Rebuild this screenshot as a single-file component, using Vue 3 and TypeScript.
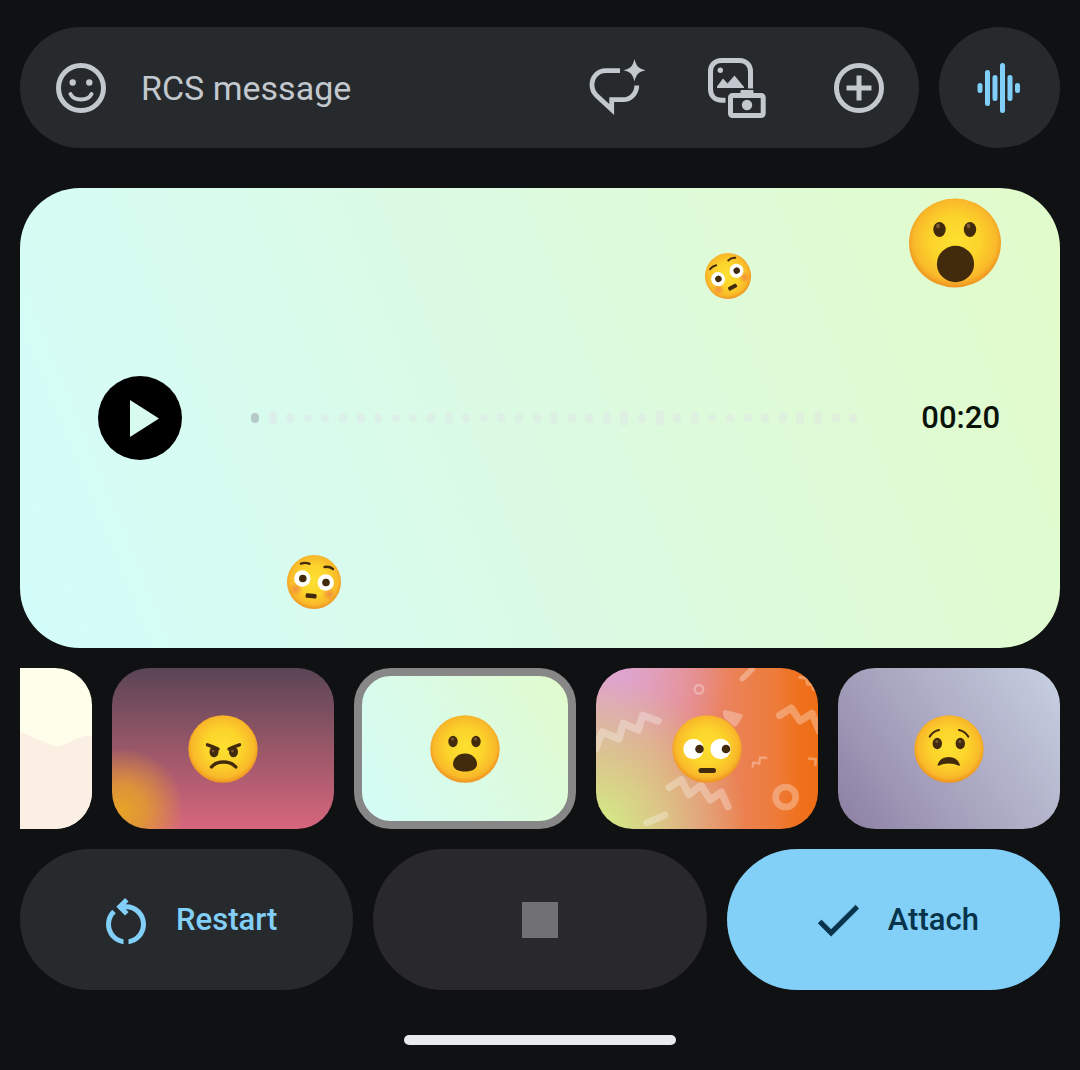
<script setup lang="ts">
import { ref } from 'vue'

interface Theme {
  id: string
  label: string
  emoji: string
}

const themes: Theme[] = [
  { id: 'cream', label: 'Cream', emoji: '' },
  { id: 'angry', label: 'Angry', emoji: 'angry' },
  { id: 'surprised', label: 'Surprised', emoji: 'surprised' },
  { id: 'party', label: 'Eye roll', emoji: 'eyeroll' },
  { id: 'worried', label: 'Worried', emoji: 'worried' },
]

const selected = ref('surprised')
const message = ref('')

const bars: number[] = [
  10, 14, 10, 8, 8, 10, 10, 10, 8, 8, 10, 12, 10, 8, 10, 10, 10, 12,
  10, 10, 12, 16, 10, 16, 10, 12, 8, 8, 8, 10, 10, 12, 14, 10, 10,
]
</script>

<template>
  <svg class="sprite" aria-hidden="true">
    <defs>
      <radialGradient id="skin" cx="50%" cy="47%" r="53%">
        <stop offset="0" stop-color="#fde030" />
        <stop offset="0.5" stop-color="#fcd42b" />
        <stop offset="0.85" stop-color="#f9b92a" />
        <stop offset="1" stop-color="#ee9220" />
      </radialGradient>
      <radialGradient id="blush">
        <stop offset="0" stop-color="#ef7f45" stop-opacity="0.75" />
        <stop offset="1" stop-color="#ef7f45" stop-opacity="0" />
      </radialGradient>
      <symbol id="gasp" viewBox="0 0 92 90">
        <ellipse cx="46" cy="45" rx="46" ry="44.5" fill="url(#skin)" />
        <g fill="#422b0d">
          <ellipse cx="30.500" cy="31.5" rx="6.2" ry="7.4" />
          <ellipse cx="61" cy="31.5" rx="6.2" ry="7.4" />
          <ellipse cx="46.500" cy="66" rx="18.6" ry="18.2" />
        </g>
        <g fill="#7b5a35">
          <ellipse cx="29" cy="28" rx="1.8" ry="2.2" />
          <ellipse cx="59.5" cy="28" rx="1.8" ry="2.2" />
        </g>
      </symbol>
      <symbol id="flushed" viewBox="0 0 54 54">
        <circle cx="27" cy="27" r="27" fill="url(#skin)" />
        <circle cx="9" cy="34" r="7" fill="url(#blush)" />
        <circle cx="42" cy="39" r="7" fill="url(#blush)" />
        <circle cx="15.3" cy="23.500" r="8.2" fill="#fff" />
        <circle cx="38.7" cy="27.500" r="8.2" fill="#fff" />
        <circle cx="15.8" cy="23.500" r="3.8" fill="#422b0d" />
        <circle cx="39" cy="27.500" r="3.8" fill="#422b0d" />
        <g fill="none" stroke="#422b0d" stroke-width="2.400" stroke-linecap="round">
          <path d="M14 8.600Q18.500 7 22.500 8.800" />
          <path d="M37.500 12Q42.500 11.200 46 14" />
        </g>
        <rect x="18.600" y="38.600" width="11" height="4.600" rx="1.500" fill="#422b0d" transform="rotate(6 24 41)" />
      </symbol>
      <symbol id="surprised" viewBox="0 0 70 68">
        <ellipse cx="35" cy="34" rx="34.700" ry="33.700" fill="url(#skin)" />
        <g fill="#422b0d">
          <ellipse cx="23" cy="26.500" rx="4.700" ry="5.700" />
          <ellipse cx="46" cy="26.500" rx="4.700" ry="5.700" />
          <path d="M35 38.500C42 38.500 47 43.500 47 49C47 54 42 56.500 35 56.500S23 54 23 49C23 43.500 28 38.500 35 38.500Z" />
        </g>
        <g fill="#7b5a35">
          <circle cx="22.500" cy="24" r="1.500" />
          <circle cx="45.500" cy="24" r="1.500" />
        </g>
      </symbol>
      <symbol id="angry" viewBox="0 0 70 68">
        <ellipse cx="35" cy="34" rx="34.700" ry="33.700" fill="url(#skin)" />
        <ellipse cx="26" cy="37" rx="4.500" ry="5.200" fill="#422b0d" />
        <ellipse cx="45.500" cy="37" rx="4.500" ry="5.200" fill="#422b0d" />
        <circle cx="25" cy="36" r="1.300" fill="#7b5a35" />
        <circle cx="44.500" cy="36" r="1.300" fill="#7b5a35" />
        <g fill="none" stroke="#422b0d" stroke-width="3.400" stroke-linecap="round">
          <path d="M19.500 29.800Q25 31.500 30 34" />
          <path d="M51.500 29.800Q46 31.500 41 34" />
          <path d="M23.500 52Q27.500 47 35.500 47T47.800 52" />
        </g>
      </symbol>
      <symbol id="eyeroll" viewBox="0 0 70 68">
        <ellipse cx="35" cy="34" rx="34.700" ry="33.700" fill="url(#skin)" />
        <circle cx="21.500" cy="34" r="10.200" fill="#fff" />
        <circle cx="48.500" cy="34" r="10.200" fill="#fff" />
        <circle cx="27.500" cy="34" r="4.300" fill="#422b0d" />
        <circle cx="54" cy="34" r="4.300" fill="#422b0d" />
        <rect x="26.500" y="53" width="17.500" height="5" rx="2.500" fill="#422b0d" />
      </symbol>
      <symbol id="worried" viewBox="0 0 70 68">
        <ellipse cx="35" cy="34" rx="34.700" ry="33.700" fill="url(#skin)" />
        <g fill="#422b0d">
          <ellipse cx="23.300" cy="28.500" rx="4.700" ry="5.700" />
          <ellipse cx="46.300" cy="28.500" rx="4.700" ry="5.700" />
          <path d="M23.500 50Q26 42 34.700 42T46 50Q46 51 45 50.800Q40 48.500 34.700 48.500T24.500 50.800Q23.500 51 23.500 50Z" />
        </g>
        <circle cx="22.800" cy="26.500" r="1.500" fill="#7b5a35" />
        <circle cx="45.800" cy="26.500" r="1.500" fill="#7b5a35" />
        <g fill="none" stroke="#422b0d" stroke-width="2.200" stroke-linecap="round">
          <path d="M15.800 21.500Q19 16.200 25 15" />
          <path d="M54.200 21.500Q51 16.200 45 15" />
        </g>
      </symbol>
    </defs>
  </svg>

  <main class="screen">
    <header class="composer">
      <div class="field">
        <button class="icon-button" type="button" aria-label="Emoji">
          <svg width="52" height="52" viewBox="0 0 52 52" fill="none" stroke="currentColor">
            <circle cx="26" cy="26" r="22.500" stroke-width="5" />
            <path d="M15.500 32C19 39.300 33 39.300 36.500 32" stroke-width="4" stroke-linecap="round" />
            <circle cx="17.700" cy="20.500" r="3.200" fill="currentColor" stroke="none" />
            <circle cx="34.300" cy="20.500" r="3.200" fill="currentColor" stroke="none" />
          </svg>
        </button>
        <input v-model="message" class="message" type="text" placeholder="RCS message" aria-label="RCS message" />
        <div class="tools">
          <button class="icon-button" type="button" aria-label="Magic compose">
            <svg width="60" height="60" viewBox="0 0 60 60">
              <path d="M35 12.700H21C12.500 12.700 7 19 7 27C7 31 8.500 34.500 11.500 37.500L26.700 51.500V41.700H38C46 41.700 51.500 35.500 51.800 27.500" fill="none" stroke="currentColor" stroke-width="4.800" />
              <path d="M49.500 1C51.300 8.200 53.300 10.500 60.500 12.300C53.300 14.100 51.300 16.300 49.500 23.500C47.700 16.300 45.700 14.100 38.700 12.300C45.700 10.500 47.700 8.200 49.500 1Z" fill="currentColor" />
            </svg>
          </button>
          <button class="icon-button" type="button" aria-label="Gallery and camera">
            <svg width="62" height="64" viewBox="0 1 62 64" fill="none" stroke="currentColor" stroke-width="5">
              <path d="M20.500 45.300H17C10 45.300 5.500 41 5.500 34V16.500C5.500 10 10 5.500 16.500 5.500H34.500C41 5.500 45.500 10 45.500 16.500V33.500" />
              <rect x="25.500" y="40.500" width="32.700" height="20" rx="2" />
              <g fill="currentColor" stroke="none">
                <circle cx="15.300" cy="15.300" r="2.700" />
                <path d="M12 33V31.500L18 23.500L22.500 28.500L29.500 20.500L39 32V33Z" />
                <rect x="35.500" y="35" width="13" height="4" rx="1" />
                <circle cx="42" cy="50" r="5.200" />
              </g>
            </svg>
          </button>
          <button class="icon-button" type="button" aria-label="Add attachment">
            <svg width="52" height="52" viewBox="0 0 52 52" fill="none" stroke="currentColor">
              <circle cx="26" cy="26" r="22.500" stroke-width="5" />
              <path d="M26 13.500V38.500M13.500 26H38.500" stroke-width="5" />
            </svg>
          </button>
        </div>
      </div>
      <button class="voice" type="button" aria-label="Voice message">
        <svg width="46" height="50" viewBox="0 0 46 50" stroke="currentColor" stroke-width="5" stroke-linecap="round">
          <path d="M3 22.500V27.500M10.500 9.500V40.500M18 14.500V35.500M25.500 2.500V47.500M33 14.500V35.500M40.500 22.500V27.500" />
        </svg>
      </button>
    </header>

    <section class="preview" aria-label="Voice message preview">
      <svg class="sticker sticker-gasp"><use href="#gasp" /></svg>
      <svg class="sticker sticker-tilted"><use href="#flushed" /></svg>
      <svg class="sticker sticker-flushed"><use href="#flushed" /></svg>
      <button class="play" type="button" aria-label="Play">
        <svg width="84" height="84" viewBox="0 0 84 84">
          <path d="M32 24V61L61 42.500Z" fill="#d7fbef" />
        </svg>
      </button>
      <div class="wave">
        <span v-for="(h, i) in bars" :key="i" :class="['tick', { played: i === 0 }]" :style="{ height: h + 'px' }" />
      </div>
      <time class="time">00:20</time>
    </section>

    <section class="themes" aria-label="Mood themes">
      <button
        v-for="t in themes"
        :key="t.id"
        type="button"
        :class="['theme', t.id, { selected: selected === t.id }]"
        :aria-label="t.label"
        :aria-pressed="selected === t.id"
        @click="selected = t.id"
      >
        <svg v-if="t.id === 'cream'" class="pattern" viewBox="-390 54 666 483">
          <path d="M-390 255L-270 290L-160 245L-50 290L60 246Q75 250 90 257L150 284Q170 292 190 284L250 259Q262 256 276 257V537H-390Z" fill="#fbefe4" />
        </svg>
        <svg v-if="t.id === 'party'" class="pattern" viewBox="48 54 666 483" fill="none" stroke="#fff" stroke-opacity="0.3" stroke-linejoin="round" stroke-linecap="round">
          <path d="M48 296L66 246L117 267L130 220L175 240L188 196L234 213" stroke-width="22" />
          <path d="M268 412L304 389L326 434L363 406L391 450L424 426L444 470" stroke-width="22" />
          <path d="M599 196L634 174L660 213L696 190L718 243" stroke-width="22" />
          <path d="M660 82L680 84L682 102L698 104L700 118" stroke-width="10" />
          <path d="M518 350L520 337L538 341L540 322L559 324" stroke-width="7" />
          <path d="M688 326L707 327L706 345" stroke-width="8" />
          <path d="M487 86L516 58" stroke-width="17" />
          <path d="M201 518L255 495" stroke-width="21" />
          <circle cx="357" cy="118" r="13" stroke-width="7" />
          <circle cx="617" cy="441" r="30" stroke-width="20" />
          <path d="M436 180L484 192Q491 195 487 202L472 226Q467 233 459 227L432 203Q424 180 436 180Z" fill="#fff" fill-opacity="0.3" stroke="none" />
        </svg>
        <svg v-if="t.emoji" class="face"><use :href="'#' + t.emoji" /></svg>
      </button>
    </section>

    <footer class="actions">
      <button class="action restart" type="button">
        <svg width="60" height="60" viewBox="0 -988 960 960" fill="currentColor">
          <path d="M440-122q-121-15-200.500-105.500T160-440q0-66 26-126.500T260-672l57 57q-38 34-57.500 79T240-440q0 88 56 155.500T440-202v80Zm80 0v-80q87-16 143.500-83T720-440q0-100-70-170t-170-70h-3l44 44-56 56-140-140 140-140 56 56-44 44h3q134 0 227 93t93 227q0 121-79.500 211.500T520-122Z" />
        </svg>
        <span>Restart</span>
      </button>
      <button class="action stop" type="button" aria-label="Stop" disabled><span class="square" /></button>
      <button class="action attach" type="button">
        <svg width="60" height="60" viewBox="-1 -1 26 26" fill="currentColor" stroke="currentColor" stroke-width="0.300">
          <path d="M9 16.170L4.830 12l-1.420 1.410L9 19 21 7l-1.410-1.410z" />
        </svg>
        <span>Attach</span>
      </button>
    </footer>

    <div class="home-bar" />
  </main>
</template>

<style>
body {
  margin: 0;
  background: #0f1112;
}
</style>

<style scoped>
.sprite {
  position: absolute;
  width: 0;
  height: 0;
}
.screen {
  box-sizing: border-box;
  display: flex;
  flex-direction: column;
  gap: 20px;
  min-height: 100vh;
  padding: 27px 20px 25px;
  background: #0f1112;
  font-family: Roboto, "Noto Sans", sans-serif;
}
button {
  border: 0;
  padding: 0;
  background: none;
  color: inherit;
  font: inherit;
  cursor: pointer;
}
svg {
  display: block;
  flex: none;
}
.composer {
  display: flex;
  gap: 20px;
  margin-bottom: 20px;
}
.field {
  box-sizing: border-box;
  display: flex;
  flex: 1;
  align-items: center;
  min-width: 0;
  height: 121px;
  padding: 0 34px 0 35px;
  border-radius: 61px;
  background: #272a2d;
  color: #c2c8cd;
}
.message {
  flex: 1;
  min-width: 0;
  margin-left: 34px;
  padding: 0;
  border: 0;
  outline: 0;
  background: none;
  color: #c2c8cd;
  font: 400 34px/48px Roboto, "Noto Sans", sans-serif;
}
.message::placeholder {
  color: #c2c8cd;
  opacity: 1;
}
.tools {
  display: flex;
  align-items: center;
  gap: 60px;
}
.tools .icon-button:last-child {
  margin-left: 6px;
}
.tools svg {
  overflow: visible;
}
.voice {
  display: flex;
  flex: none;
  align-items: center;
  justify-content: center;
  width: 121px;
  height: 121px;
  border-radius: 50%;
  background: #272a2d;
  color: #7fcff8;
}
.preview {
  position: relative;
  box-sizing: border-box;
  display: flex;
  align-items: center;
  height: 460px;
  padding: 0 60px 0 78px;
  border-radius: 60px;
  background: linear-gradient(68deg, #d3fdfb 0%, #d6fcf4 15%, #d9fbea 35%, #ddfadd 60%, #e0fbd0 85%, #e1fbcb 100%);
}
.sticker {
  position: absolute;
}
.sticker-gasp {
  top: 10px;
  right: 59px;
  width: 92px;
  height: 90px;
}
.sticker-tilted {
  top: 65px;
  right: 309px;
  width: 46px;
  height: 46px;
  transform: rotate(-34deg);
}
.sticker-flushed {
  bottom: 39px;
  left: 267px;
  width: 54px;
  height: 54px;
}
.play {
  flex: none;
  border-radius: 50%;
  background: #000;
}
.wave {
  display: flex;
  flex: 1;
  align-items: center;
  justify-content: space-between;
  margin: 0 64px 0 69px;
}
.tick {
  width: 8px;
  border-radius: 4px;
  background: rgba(225, 224, 232, 0.4);
}
.tick.played {
  background: #b6c8ca;
}
.time {
  color: #0a120a;
  font-size: 31px;
  font-weight: 500;
  line-height: 40px;
}
.themes {
  display: flex;
  justify-content: flex-end;
  gap: 20px;
  overflow: hidden;
}
.theme {
  position: relative;
  box-sizing: border-box;
  display: flex;
  flex: none;
  align-items: center;
  justify-content: center;
  width: 222px;
  height: 161px;
  border-radius: 37px;
  overflow: hidden;
}
.theme.selected {
  border: 8px solid #878787;
}
.pattern {
  position: absolute;
  inset: 0;
  width: 100%;
  height: 100%;
}
.face {
  position: relative;
  width: 70px;
  height: 68px;
}
.cream {
  background: #fffeea;
}
.angry {
  background:
    radial-gradient(circle at 10px 142px, #e6a327 0, rgba(226, 155, 48, 0.85) 25px, rgba(205, 115, 90, 0) 62px),
    linear-gradient(#594556, #995768 50%, #d7667d);
}
.surprised {
  background: linear-gradient(60deg, #d3fdf9, #dafbe6 45%, #e1fbca);
  background-origin: border-box;
}
.party {
  background:
    radial-gradient(circle at 0 100%, #d2f084 0, rgba(214, 222, 134, 0.85) 45px, rgba(220, 190, 140, 0) 150px),
    radial-gradient(circle at 10% 0, #dea6d3 0, rgba(226, 150, 165, 0) 110px),
    linear-gradient(90deg, #e29b9b, #e98778 45%, #eb8152 65%, #ed7c3c 80%, #ef7220 90%, #ee6e14);
}
.worried {
  background: linear-gradient(55deg, #8b7fa3, #a6a2bd 40%, #b5b7cd 68%, #c8d1e3);
}
.actions {
  display: grid;
  grid-template-columns: repeat(3, 1fr);
  gap: 20px;
}
.action {
  display: flex;
  align-items: center;
  justify-content: center;
  gap: 20px;
  height: 141px;
  border-radius: 71px;
  font-size: 31px;
  font-weight: 500;
  line-height: 40px;
}
.restart {
  background: #272a2d;
  color: #82cff7;
}
.stop {
  background: #29292b;
}
.square {
  width: 36px;
  height: 36px;
  background: #717174;
}
.attach {
  background: #82cff8;
  color: #07344a;
}
.home-bar {
  align-self: center;
  width: 272px;
  height: 10px;
  margin-top: 25px;
  border-radius: 5px;
  background: #e9eaec;
}
</style>
